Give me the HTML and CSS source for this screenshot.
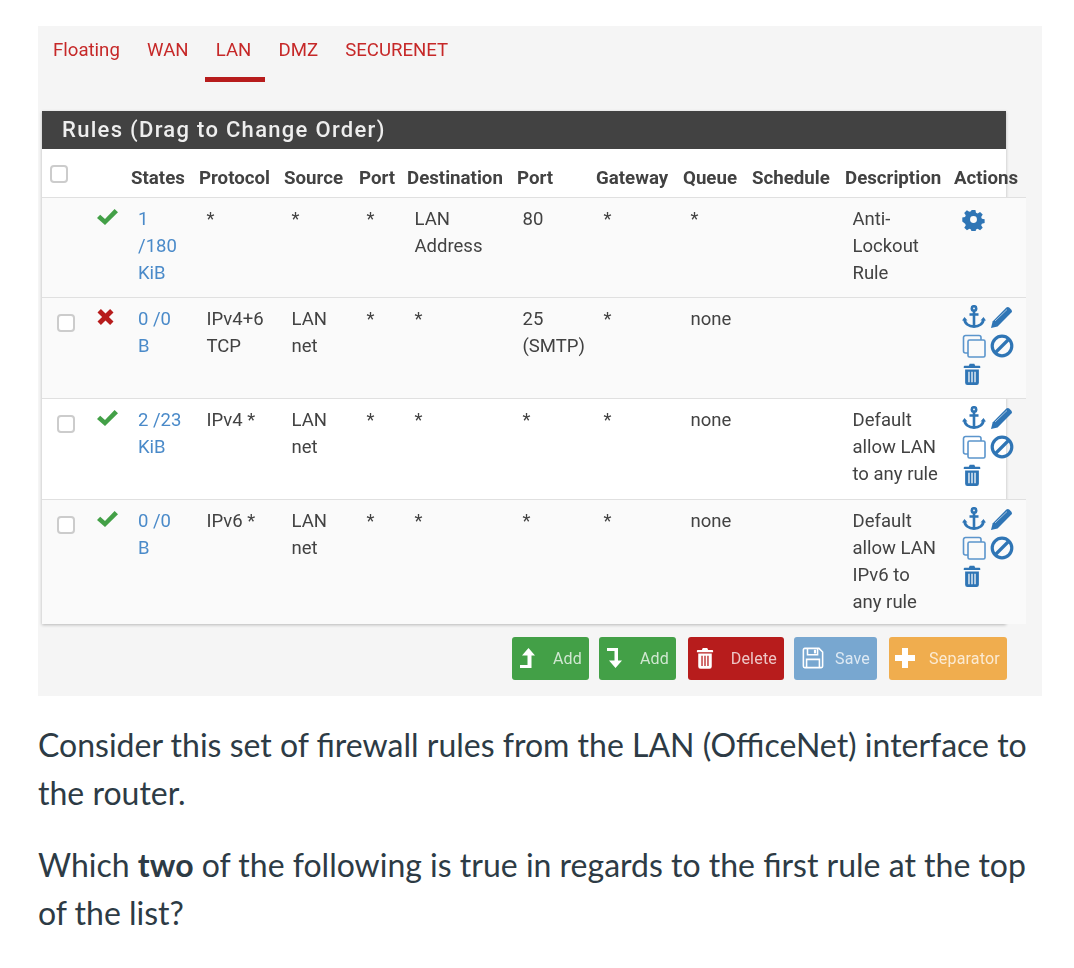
FILE: index.html
```html
<!DOCTYPE html>
<html lang="en">

<head>
    <meta charset="UTF-8" />
    <title>Firewall rules question</title>
    <link rel="stylesheet" href="styles.css">
</head>

<body>
    <svg class="sprites" width="0" height="0">
        <symbol id="i-check" viewBox="0 0 21 16"><polygon points="0,9 3.2,5.8 8,10 17.6,0 21,3.2 8,16" /></symbol>
        <symbol id="i-cross" viewBox="0 0 16 16"><path d="M0 3.4 3.4 0 8 4.6 12.6 0 16 3.4 11.4 8 16 12.6 12.6 16 8 11.4 3.4 16 0 12.6 4.6 8z" /></symbol>
        <symbol id="i-gear" viewBox="0 0 24 24"><path fill-rule="evenodd" d="M9.8 1h4.4l.7 3.2 1.9.8 2.8-1.8 3.1 3.1-1.8 2.8.8 1.9 3.2.7v4.4l-3.2.7-.8 1.9 1.8 2.8-3.1 3.1-2.8-1.8-1.9.8-.7 3.2H9.8l-.7-3.2-1.9-.8-2.8 1.8-3.1-3.1 1.8-2.8-.8-1.9L-1 14.2V9.8l3.2-.7.8-1.9-1.8-2.8 3.1-3.1 2.8 1.8 1.9-.8zM12 8a4 4 0 1 0 0 8 4 4 0 0 0 0-8z" transform="translate(1.2 1.2) scale(.9)" /></symbol>
        <symbol id="i-anchor" viewBox="0 0 24 24"><g fill="none" stroke="currentColor" stroke-width="2.6"><circle cx="12" cy="3.4" r="2.2" /><path d="M12 6v16M7.5 9.5h9M2.5 14c0 4.6 4.4 7.6 9.5 7.6s9.500-3 9.500-7.600" /></g><path d="M0 15.500 2.500 12 5.500 15.500zM18.500 15.500 21.500 12 24 15.500z" /></symbol>
        <symbol id="i-pencil" viewBox="0 0 24 24"><path d="M1 23l1.600-6.600L16.400 2.600a2 2 0 0 1 2.800 0l2.200 2.200a2 2 0 0 1 0 2.800L7.600 21.400z" /><path d="M5 16 17 4.500" stroke="#fafafa" stroke-width="1" opacity=".6" /></symbol>
        <symbol id="i-copy" viewBox="0 0 24 24"><g fill="none" stroke="#5b95cc" stroke-width="1.600"><path d="M6 19H3.500A2 2 0 0 1 1.500 17V3.500A2 2 0 0 1 3.500 1.500H17A2 2 0 0 1 19 3.500V6" /><rect x="6" y="6" width="17" height="17" rx="1.500" /></g></symbol>
        <symbol id="i-ban" viewBox="0 0 24 24"><g fill="none" stroke="currentColor" stroke-width="3.200"><circle cx="12" cy="12" r="9.800" /><path d="M5.500 18.500 18.500 5.500" /></g></symbol>
        <symbol id="i-trash" viewBox="0 0 20 24"><path fill-rule="evenodd" d="M6.500 3 7.500.8h5L13.500 3H18a1 1 0 0 1 1 1v1.500H1V4a1 1 0 0 1 1-1zM2.500 7h15v14.500A2.500 2.500 0 0 1 15 24H5a2.500 2.500 0 0 1-2.500-2.500zM6 9.500v11.500h1.400V9.500zM9.300 9.500v11.500h1.400V9.500zM12.600 9.500v11.500h1.400V9.500z" /></symbol>
        <symbol id="i-up" viewBox="0 0 15 20"><path d="M8.500 0 15 7.500h-3.500V20H0v-3h7.500V7.500H2z" /></symbol>
        <symbol id="i-down" viewBox="0 0 15 20"><path d="M0 0h11v12.500h4L8.500 20 2 12.500h5.500V3H0z" /></symbol>
        <symbol id="i-save" viewBox="0 0 24 24"><g fill="none" stroke="currentColor" stroke-width="1.700"><path d="M1.500 3A1.500 1.500 0 0 1 3 1.500h15.500l4 4V21a1.500 1.500 0 0 1-1.500 1.500H3A1.500 1.500 0 0 1 1.500 21z" /><path d="M6 1.500v7h11v-7M5 22.500v-9h14v9" /></g><rect x="13" y="3" width="2.400" height="4" /></symbol>
        <symbol id="i-plus" viewBox="0 0 20 20"><path d="M7 0h6v7h7v6h-7v7H7v-7H0V7h7z" /></symbol>
    </svg>

    <div class="figure">
        <ul class="tabs">
            <li>Floating</li>
            <li>WAN</li>
            <li class="active">LAN</li>
            <li>DMZ</li>
            <li>SECURENET</li>
        </ul>

        <div class="panel">
            <h2 class="panel-title">Rules (Drag to Change Order)</h2>
            <table class="rules">
                <colgroup>
                    <col class="c-select">
                    <col class="c-status">
                    <col class="c-states">
                    <col class="c-protocol">
                    <col class="c-source">
                    <col class="c-port">
                    <col class="c-dest">
                    <col class="c-dport">
                    <col class="c-gateway">
                    <col class="c-queue">
                    <col class="c-schedule">
                    <col class="c-desc">
                    <col class="c-actions">
                </colgroup>
                <thead>
                    <tr>
                        <th class="head-select"><input type="checkbox" class="box"></th>
                        <th></th>
                        <th>States</th>
                        <th>Protocol</th>
                        <th>Source</th>
                        <th>Port</th>
                        <th>Destination</th>
                        <th class="head-dport">Port</th>
                        <th>Gateway</th>
                        <th>Queue</th>
                        <th>Schedule</th>
                        <th>Description</th>
                        <th>Actions</th>
                    </tr>
                </thead>
                <tbody>
                    <tr class="shaded">
                        <td></td>
                        <td class="status"><svg class="ic-check"><use href="#i-check" /></svg></td>
                        <td class="states">1<br>/180<br>KiB</td>
                        <td>*</td>
                        <td>*</td>
                        <td>*</td>
                        <td>LAN<br>Address</td>
                        <td>80</td>
                        <td>*</td>
                        <td>*</td>
                        <td></td>
                        <td>Anti-<br>Lockout<br>Rule</td>
                        <td>
                            <svg class="ic-gear"><use href="#i-gear" /></svg>
                        </td>
                    </tr>
                    <tr class="shaded">
                        <td class="select"><input type="checkbox" class="box"></td>
                        <td class="status"><svg class="ic-cross"><use href="#i-cross" /></svg></td>
                        <td class="states">0 /0<br>B</td>
                        <td>IPv4+6<br>TCP</td>
                        <td>LAN<br>net</td>
                        <td>*</td>
                        <td>*</td>
                        <td>25<br>(SMTP)</td>
                        <td>*</td>
                        <td>none</td>
                        <td></td>
                        <td></td>
                        <td>
                            <div class="actions">
                                <svg><use href="#i-anchor" /></svg>
                                <svg><use href="#i-pencil" /></svg>
                                <svg><use href="#i-copy" /></svg>
                                <svg><use href="#i-ban" /></svg>
                                <svg class="trash"><use href="#i-trash" /></svg>
                            </div>
                        </td>
                    </tr>
                    <tr>
                        <td class="select"><input type="checkbox" class="box"></td>
                        <td class="status"><svg class="ic-check"><use href="#i-check" /></svg></td>
                        <td class="states">2 /23<br>KiB</td>
                        <td>IPv4 *</td>
                        <td>LAN<br>net</td>
                        <td>*</td>
                        <td>*</td>
                        <td>*</td>
                        <td>*</td>
                        <td>none</td>
                        <td></td>
                        <td>Default<br>allow LAN<br>to any rule</td>
                        <td>
                            <div class="actions">
                                <svg><use href="#i-anchor" /></svg>
                                <svg><use href="#i-pencil" /></svg>
                                <svg><use href="#i-copy" /></svg>
                                <svg><use href="#i-ban" /></svg>
                                <svg class="trash"><use href="#i-trash" /></svg>
                            </div>
                        </td>
                    </tr>
                    <tr class="shaded">
                        <td class="select"><input type="checkbox" class="box"></td>
                        <td class="status"><svg class="ic-check"><use href="#i-check" /></svg></td>
                        <td class="states">0 /0<br>B</td>
                        <td>IPv6 *</td>
                        <td>LAN<br>net</td>
                        <td>*</td>
                        <td>*</td>
                        <td>*</td>
                        <td>*</td>
                        <td>none</td>
                        <td></td>
                        <td>Default<br>allow LAN<br>IPv6 to<br>any rule</td>
                        <td>
                            <div class="actions">
                                <svg><use href="#i-anchor" /></svg>
                                <svg><use href="#i-pencil" /></svg>
                                <svg><use href="#i-copy" /></svg>
                                <svg><use href="#i-ban" /></svg>
                                <svg class="trash"><use href="#i-trash" /></svg>
                            </div>
                        </td>
                    </tr>
                </tbody>
            </table>
        </div>

        <div class="buttons">
            <button class="btn btn-green"><svg class="arrow"><use href="#i-up" /></svg>Add</button>
            <button class="btn btn-green"><svg class="arrow"><use href="#i-down" /></svg>Add</button>
            <button class="btn btn-red"><svg class="btn-trash"><use href="#i-trash" /></svg>Delete</button>
            <button class="btn btn-blue"><svg class="btn-save"><use href="#i-save" /></svg>Save</button>
            <button class="btn btn-orange"><svg class="btn-plus"><use href="#i-plus" /></svg>Separator</button>
        </div>
    </div>

    <div class="question">
        <p>Consider this set of firewall rules from the LAN (OfficeNet) interface to the router.</p>
        <p>Which <strong>two</strong> of the following is true in regards to the first rule at the top of the list?</p>
    </div>
</body>

</html>
```

FILE: styles.css
```css
body {
    margin: 0;
    background-color: #fff;
    font-family: 'Roboto', sans-serif;
}

.sprites {
    position: absolute;
}

/* the figure is a scaled-up screenshot, so it is a little soft */
.figure {
    width: 1004px;
    height: 670px;
    margin: 26px 0 0 38px;
    padding-left: 4px;
    box-sizing: border-box;
    background-color: #f5f5f5;
    filter: blur(0.5px);
}

/* tabs */
.tabs {
    display: flex;
    height: 85px;
    margin: 0;
    padding: 0;
    list-style: none;
    color: #c62828;
    font-size: 18.600px;
}

.tabs li {
    height: 40px;
    padding: 11px 13.600px 0;
    line-height: 27px;
}

.tabs li.active {
    margin-left: 2.600px;
    padding-left: 11px;
    border-bottom: 5px solid #b71c1c;
}

.tabs li:first-child {
    padding-left: 11px;
}

/* rules panel */
.panel {
    width: 964px;
    background-color: #fff;
    box-shadow: 0 1px 3px rgba(0, 0, 0, 0.25);
}

.panel-title {
    height: 38px;
    margin: 0;
    padding-left: 20px;
    background-color: #424242;
    color: #eee;
    font-size: 22px;
    font-weight: 500;
    line-height: 38px;
    letter-spacing: 1.300px;
}

.rules {
    width: 984px;
    table-layout: fixed;
    border-collapse: collapse;
    color: #424242;
    font-size: 18.500px;
    line-height: 27px;
}

.c-select { width: 46px; }
.c-status { width: 43px; }
.c-states { width: 68px; }
.c-protocol { width: 85px; }
.c-source { width: 75px; }
.c-port { width: 48px; }
.c-dest { width: 108px; }
.c-dport { width: 81px; }
.c-gateway { width: 87px; }
.c-queue { width: 69px; }
.c-schedule { width: 93px; }
.c-desc { width: 109px; }
.c-actions { width: 72px; }

.rules th {
    height: 48px;
    padding: 0 0 5px 0;
    box-sizing: border-box;
    border-bottom: 1px solid #e0e0e0;
    color: #424242;
    font-size: 18.700px;
    font-weight: 700;
    text-align: left;
    vertical-align: bottom;
    white-space: nowrap;
}

.rules th.head-select {
    padding: 0 0 14px 8px;
}

.rules th.head-dport {
    padding-left: 2px;
}

.rules td {
    padding: 8px 0 10px 7.500px;
    border-bottom: 1px solid #e0e0e0;
    vertical-align: top;
    white-space: nowrap;
}

.rules tbody tr:last-child td {
    padding-bottom: 8px;
    border-bottom: none;
}

.shaded {
    background-color: #fafafa;
}

.rules td.states {
    padding-left: 7px;
    color: #4a8ac9;
}

.rules td.select {
    padding: 16px 0 0 15px;
}

.rules td.status {
    padding: 11px 0 0 9px;
}

.box {
    display: block;
    width: 18px;
    height: 18px;
    margin: 0;
    appearance: none;
    box-sizing: border-box;
    border: 2px solid #ccc;
    border-radius: 4px;
    background-color: #fff;
}

.ic-check {
    display: block;
    width: 21px;
    height: 16px;
    fill: #43a047;
}

.ic-cross {
    display: block;
    width: 17px;
    height: 16px;
    fill: #b71c1c;
}

.ic-gear {
    display: block;
    width: 23px;
    height: 23px;
    margin-top: 2px;
    fill: #2f75b5;
}

.actions {
    display: grid;
    grid-template-columns: 28px 24px;
    grid-auto-rows: 29px;
    height: 83px;
    margin-top: -1px;
    color: #2f75b5;
    fill: #2f75b5;
}

.actions svg {
    width: 24px;
    height: 24px;
}

.actions .trash {
    width: 20px;
    height: 22px;
}

/* buttons */
.buttons {
    display: flex;
    justify-content: flex-end;
    gap: 10px;
    width: 965px;
    margin-top: 13px;
}

.btn {
    display: flex;
    align-items: center;
    justify-content: space-between;
    height: 43px;
    padding: 0 7px 0 8px;
    border: none;
    border-radius: 3px;
    color: rgba(255, 255, 255, 0.75);
    font-family: 'Roboto', sans-serif;
    font-size: 16px;
    letter-spacing: 0.2px;
}

.btn svg {
    flex: none;
    fill: #fff;
    color: #fff;
}

.btn-green {
    width: 77px;
    background-color: #43a047;
}

.btn-red {
    width: 96px;
    margin-left: 2px;
    background-color: #b71c1c;
}

.btn-blue {
    width: 83px;
    background-color: #78a7d0;
}

.btn-orange {
    width: 118px;
    margin-left: 2px;
    padding-left: 6px;
    background-color: #f0ad4e;
}

.arrow {
    width: 15px;
    height: 20px;
}

.btn-trash {
    width: 18px;
    height: 22px;
}

.btn-save {
    width: 22px;
    height: 22px;
}

.btn-plus {
    width: 20px;
    height: 20px;
}

/* question text */
.question {
    margin: 25px 40px 0 38px;
    color: #2d3b45;
    font-family: 'Lato', sans-serif;
    font-size: 32px;
    line-height: 48px;
}

.question p {
    margin: 0 0 24px;
}
```
